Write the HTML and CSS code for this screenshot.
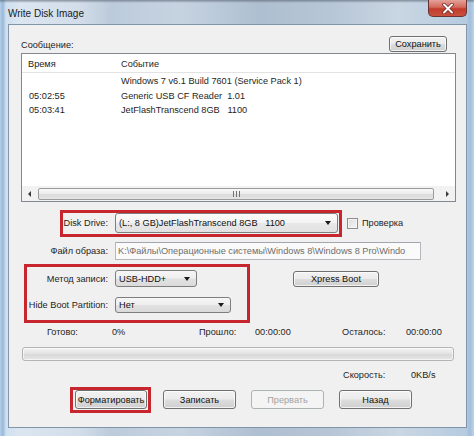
FILE: index.html
```html
<!DOCTYPE html>
<html lang="ru">
<head>
<meta charset="utf-8">
<title>Write Disk Image</title>
<link rel="stylesheet" href="styles.css">
</head>
<body>
<div class="window">
  <div class="titlebar">
    <span class="title">Write Disk Image</span>
    <div class="close">
      <svg width="14" height="11" viewBox="0 0 14 11"><path d="M3 1.5 L11 9.5 M11 1.5 L3 9.5" stroke="#6b1c1c" stroke-width="3.4" stroke-linecap="round"/><path d="M3 1.5 L11 9.5 M11 1.5 L3 9.5" stroke="#ffffff" stroke-width="2" stroke-linecap="round"/></svg>
    </div>
  </div>
  <div class="client">
    <div class="msg-row">
      <span class="msg-label">Сообщение:</span>
      <button class="btn btn-save">Сохранить</button>
    </div>
    <div class="listbox">
      <div class="lv-header"><span class="c1">Время</span><span class="c2">Событие</span></div>
      <div class="lv-body">
        <div class="lv-row"><span class="c1"></span><span class="c2">Windows 7 v6.1 Build 7601 (Service Pack 1)</span></div>
        <div class="lv-row"><span class="c1">05:02:55</span><span class="c2">Generic USB CF Reader  1.01</span></div>
        <div class="lv-row"><span class="c1">05:03:41</span><span class="c2">JetFlashTranscend 8GB   1100</span></div>
      </div>
      <div class="hscroll">
        <span class="sarrow sleft"></span>
        <div class="thumb"><span class="grip"></span></div>
        <span class="sarrow sright"></span>
      </div>
    </div>
    <div class="form-row row-drive">
      <span class="flabel">Disk Drive:</span>
      <div class="combo combo-drive"><span class="ctext">(L:, 8 GB)JetFlashTranscend 8GB   1100</span><span class="carrow"></span></div>
      <span class="check"><span class="cbox"></span>Проверка</span>
    </div>
    <div class="form-row row-file">
      <span class="flabel">Файл образа:</span>
      <div class="textbox"><span class="ttext">K:\Файлы\Операционные системы\Windows 8\Windows 8 Pro\Windo</span></div>
    </div>
    <div class="form-row row-method">
      <span class="flabel">Метод записи:</span>
      <div class="combo combo-method"><span class="ctext">USB-HDD+</span><span class="carrow"></span></div>
      <button class="btn btn-xpress">Xpress Boot</button>
    </div>
    <div class="form-row row-hide">
      <span class="flabel">Hide Boot Partition:</span>
      <div class="combo combo-hide"><span class="ctext">Нет</span><span class="carrow"></span></div>
    </div>
    <div class="status-row">
      <span>Готово:</span><span>0%</span><span>Прошло:</span><span>00:00:00</span><span>Осталось:</span><span>00:00:00</span>
    </div>
    <div class="progress"></div>
    <div class="speed-row">
      <span>Скорость:</span><span>0KB/s</span>
    </div>
    <div class="btn-row">
      <button class="btn btn-main">Форматировать</button>
      <button class="btn btn-main">Записать</button>
      <button class="btn btn-main btn-disabled">Прервать</button>
      <button class="btn btn-main">Назад</button>
    </div>
    <div class="mark mark-drive"></div>
    <div class="mark mark-method"></div>
    <div class="mark mark-format"></div>
  </div>
</div>
</body>
</html>
```
FILE: styles.css
```css
* { box-sizing: border-box; }
html, body { margin: 0; padding: 0; }
body {
  width: 474px;
  height: 436px;
  overflow: hidden;
  font-family: "Liberation Sans", Arial, sans-serif;
  font-size: 9.2px;
  color: #1e1e1e;
  background: #b9cfe5;
}
.window {
  width: 474px;
  height: 436px;
  display: flex;
  flex-direction: column;
  padding: 0 7px 8px 8px;
  background:
    linear-gradient(180deg, rgba(70,80,95,0.55) 0px, rgba(255,255,255,0) 3px),
    linear-gradient(90deg, #b3cde6 0px, #99b9d9 3px, #cfe0f0 6px, #dbe6f1 20px, #d2dde9 80px, #bccbdb 110px, #c6d3e1 180px, #aebfd1 260px, #b7c6d6 330px, #c9d6e3 400px, #b6cbe0 466px, #a2bedb 470px, #bcd4eb 474px);
}
.titlebar {
  height: 24px;
  display: flex;
  justify-content: space-between;
  align-items: flex-start;
}
.title {
  font-family: "Liberation Sans", Arial, sans-serif;
  font-size: 10px;
  color: #1a1a1a;
  line-height: 12px;
  padding-top: 8px;
}
.close {
  width: 39px;
  height: 17px;
  margin-left: auto;
  margin-right: 0;
  border: 1px solid #6a3434;
  border-top: none;
  border-radius: 0 0 5px 5px;
  background: linear-gradient(180deg, #e2a39a 0%, #d46a5c 45%, #c23c2c 55%, #c9503d 100%);
  display: flex;
  align-items: center;
  justify-content: center;
}
.close svg { display: block; }
.client {
  position: relative;
  flex: 1;
  background: #f0f0f0;
  border: 1px solid #8295a9;
  padding: 11px 10px 0 12px;
  display: flex;
  flex-direction: column;
}
.msg-row {
  height: 16px;
  display: flex;
  align-items: center;
  justify-content: space-between;
  padding-right: 9px;
}
.msg-label { line-height: 16px; padding-top: 1px; }
.btn {
  font-family: "Liberation Sans", Arial, sans-serif;
  font-size: 9.2px;
  color: #111;
  border: 1px solid #707070;
  border-radius: 3px;
  background: linear-gradient(180deg, #f2f2f2 0%, #ebebeb 48%, #dddddd 52%, #cfcfcf 100%);
  box-shadow: inset 0 0 0 1px rgba(255,255,255,0.7);
  padding: 0;
  margin: 0;
  display: flex;
  align-items: center;
  justify-content: center;
}
.btn-save { width: 58px; height: 16px; }
.listbox {
  margin-top: 1px;
  height: 149px;
  border: 1px solid #828790;
  background: #ffffff;
  display: flex;
  flex-direction: column;
}
.lv-header {
  height: 19px;
  border-bottom: 1px solid #e3e3e3;
  display: flex;
  align-items: center;
  padding-left: 6px;
  padding-top: 1px;
}
.c1 { width: 93px; flex: none; }
.c2 { white-space: pre; }
.lv-body {
  flex: 1;
  padding-top: 1px;
  padding-left: 6px;
}
.lv-row {
  display: flex;
  height: 14.5px;
  line-height: 14.5px;
  white-space: pre;
}
.lv-row .c1 { padding-left: 1px; }
.hscroll {
  height: 15px;
  display: flex;
  align-items: center;
  background: #f2f2f2;
  padding: 0 2px;
}
.sarrow {
  width: 13px;
  height: 13px;
  position: relative;
  flex: none;
}
.sarrow::after {
  content: "";
  position: absolute;
  top: 4px;
  border-top: 3px solid transparent;
  border-bottom: 3px solid transparent;
}
.sleft::after { left: 4px; border-right: 3px solid #3a3a3a; }
.sright::after { left: 6px; border-left: 3px solid #3a3a3a; }
.thumb {
  flex: 1;
  height: 12px;
  margin: 0 6px 0 1px;
  border: 1px solid #9b9b9b;
  border-radius: 2px;
  background: linear-gradient(180deg, #f7f7f7 0%, #ececec 50%, #dcdcdc 51%, #e4e4e4 100%);
  display: flex;
  align-items: center;
  justify-content: center;
}
.grip {
  width: 7px;
  height: 6px;
  background: repeating-linear-gradient(90deg, #707070 0 1px, transparent 1px 3px);
}
.form-row {
  display: flex;
  align-items: center;
}
.flabel {
  width: 87px;
  text-align: right;
  margin-right: 7px;
  flex: none;
}
.row-drive { margin-top: 11px; height: 20px; }
.row-file { margin-top: 9px; height: 18px; }
.row-method { margin-top: 10px; height: 17px; }
.row-hide { margin-top: 10px; height: 16px; }
.combo {
  height: 100%;
  border: 1px solid #7e7e7e;
  border-radius: 3px;
  background: linear-gradient(180deg, #f6f6f6 0%, #eeeeee 48%, #e2e2e2 52%, #dadada 100%);
  display: flex;
  align-items: center;
  padding: 0 6px 0 3px;
  flex: none;
}
.combo-drive {
  width: 223px;
  background: linear-gradient(180deg, #fbfbfb 0%, #f3f3f3 48%, #e8e8e8 52%, #e2e2e2 100%);
}
.combo-method { width: 82px; }
.combo-hide { width: 116px; }
.ctext { flex: 1; white-space: pre; overflow: hidden; color: #111; }
.carrow {
  width: 0;
  height: 0;
  border-left: 3.5px solid transparent;
  border-right: 3.5px solid transparent;
  border-top: 4px solid #1a1a1a;
  flex: none;
}
.check {
  display: flex;
  align-items: center;
  margin-left: 9px;
}
.cbox {
  width: 11px;
  height: 11px;
  border: 1px solid #8e8f8f;
  background: linear-gradient(135deg, #dcdcdc 0%, #f6f6f6 100%);
  box-shadow: inset 0 0 0 1px #f4f4f4;
  margin-right: 4px;
}
.textbox {
  width: 306px;
  height: 100%;
  border: 1px solid #b5b7bd;
  border-top-color: #a3a6ad;
  background: #fafafa;
  display: flex;
  align-items: center;
  padding-left: 2px;
  overflow: hidden;
  flex: none;
}
.ttext { white-space: nowrap; color: #6d6d6d; }
.btn-xpress { width: 86px; height: 16px; margin-left: 96px; margin-top: 1px; }
.status-row {
  margin-top: 12px;
  height: 14px;
  display: grid;
  grid-template-columns: 65px 87px 56px 87px 64px auto;
  align-items: center;
  padding-left: 26px;
}
.progress {
  margin: 8px 2px 0 1px;
  height: 14px;
  border: 1px solid #b4b4b4;
  border-radius: 3px;
  background: linear-gradient(180deg, #f4f4f4 0%, #e4e4e4 45%, #d9d9d9 55%, #e6e6e6 100%);
  box-shadow: inset 0 0 0 1px rgba(255,255,255,0.6);
}
.speed-row {
  margin-top: 7px;
  height: 14px;
  display: grid;
  grid-template-columns: 68px auto;
  align-items: center;
  padding-left: 322px;
}
.btn-row {
  margin-top: 8px;
  height: 19px;
  display: flex;
  gap: 15px;
  padding-left: 54px;
}
.btn-main { width: 73px; height: 19px; }
.btn-row .btn-main:first-child { width: 72px; margin-right: 1px; }
.btn-disabled {
  color: #a3a3a3;
  border-color: #adb2b5;
  background: #f4f4f4;
  box-shadow: none;
}
.mark {
  position: absolute;
  border: 3px solid #c7262f;
}
.mark-drive { left: 51px; top: 185px; width: 282px; height: 27px; }
.mark-method { left: 15px; top: 239px; width: 226px; height: 59px; }
.mark-format { left: 61px; top: 362px; width: 81px; height: 26px; }
```
